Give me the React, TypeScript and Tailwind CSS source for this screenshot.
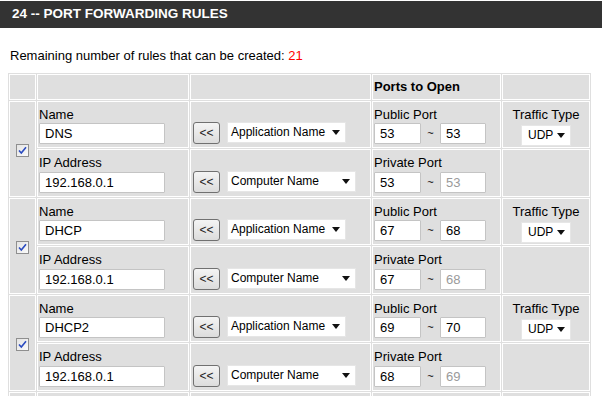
import React from "react";

type Rule = {
  name: string;
  ip: string;
  pubStart: string;
  pubEnd: string;
  privStart: string;
  privEnd: string;
};

const rules: Rule[] = [
  { name: "DNS", ip: "192.168.0.1", pubStart: "53", pubEnd: "53", privStart: "53", privEnd: "53" },
  { name: "DHCP", ip: "192.168.0.1", pubStart: "67", pubEnd: "68", privStart: "67", privEnd: "68" },
  { name: "DHCP2", ip: "192.168.0.1", pubStart: "69", pubEnd: "70", privStart: "68", privEnd: "69" },
];

const base = "border border-white bg-[#dfdfdf] p-0";
const cell = `${base} align-top`;

function Arrow() {
  return (
    <svg width="8" height="5" viewBox="0 0 8 5" className="ml-auto shrink-0">
      <path d="M0 0h8L4 5z" fill="#111" />
    </svg>
  );
}

function Field({ value, className = "", disabled = false }: { value: string; className?: string; disabled?: boolean }) {
  return (
    <div
      className={`h-[21px] whitespace-nowrap rounded-[1px] border border-[#c4c4c4] bg-white pl-[5px] leading-[19px] ${
        disabled ? "text-[#9a9a9a]" : "text-black"
      } ${className}`}
    >
      {value}
    </div>
  );
}

function Select({ label, className = "" }: { label: string; className?: string }) {
  return (
    <div
      className={`flex h-[21px] items-center gap-[4px] whitespace-nowrap border border-[#e6e6e6] bg-white pl-[3px] pr-[5px] text-[12px] leading-[19px] ${className}`}
    >
      <span>{label}</span>
      <Arrow />
    </div>
  );
}

function BackButton() {
  return (
    <div className="flex h-[22px] w-[27px] items-center justify-center rounded-[3px] border border-[#707070] bg-gradient-to-b from-[#f4f4f4] to-[#dcdcdc] text-[12px] text-[#222]">
      &lt;&lt;
    </div>
  );
}

function Check() {
  return (
    <div className="flex h-[13px] w-[13px] items-center justify-center border border-[#8f8f8f] bg-gradient-to-br from-[#e4e4e4] to-[#fafafa]">
      <svg width="9" height="9" viewBox="0 0 9 9">
        <path d="M1 4.5l2.3 2.5L8 1.2" fill="none" stroke="#2a4bc0" strokeWidth="1.6" />
      </svg>
    </div>
  );
}

function RuleRows({ rule }: { rule: Rule }) {
  return (
    <>
      <tr className="h-[47px]">
        <td rowSpan={2} className={`${base} align-middle`}>
          <div className="flex justify-center pt-[2px]">
            <Check />
          </div>
        </td>
        <td className={cell}>
          <div className="pl-[1px] pt-[4px]">
            <div className="h-[17px] leading-[17px]">Name</div>
            <Field value={rule.name} className="w-[126px]" />
          </div>
        </td>
        <td className={cell}>
          <div className="flex gap-[7px] pl-[2px] pt-[20px]">
            <BackButton />
            <Select label="Application Name" className="w-[119px]" />
          </div>
        </td>
        <td className={cell}>
          <div className="pl-[1px] pt-[4px]">
            <div className="h-[17px] leading-[17px]">Public Port</div>
            <div className="flex items-center">
              <Field value={rule.pubStart} className="w-[47px]" />
              <span className="w-[19px] text-center text-[11px]">~</span>
              <Field value={rule.pubEnd} className="w-[46px]" />
            </div>
          </div>
        </td>
        <td className={cell}>
          <div className="flex flex-col items-center pt-[4px]">
            <div className="h-[19px] leading-[18px]">Traffic Type</div>
            <Select label="UDP" className="h-[18px] w-[50px] pl-[6px] pr-[5px]" />
          </div>
        </td>
      </tr>
      <tr className="h-[48px]">
        <td className={cell}>
          <div className="pl-[1px] pt-[4px]">
            <div className="h-[18px] leading-[18px]">IP Address</div>
            <Field value={rule.ip} className="w-[126px]" />
          </div>
        </td>
        <td className={cell}>
          <div className="flex gap-[7px] pl-[2px] pt-[21px]">
            <BackButton />
            <Select label="Computer Name" className="w-[129px]" />
          </div>
        </td>
        <td className={cell}>
          <div className="pl-[1px] pt-[4px]">
            <div className="h-[18px] leading-[18px]">Private Port</div>
            <div className="flex items-center">
              <Field value={rule.privStart} className="w-[47px]" />
              <span className="w-[19px] text-center text-[11px]">~</span>
              <Field value={rule.privEnd} className="w-[46px]" disabled />
            </div>
          </div>
        </td>
        <td className={cell} />
      </tr>
    </>
  );
}

export default function App() {
  return (
    <div className="h-[396px] w-[602px] overflow-hidden bg-white font-['Liberation_Sans',Arial,sans-serif] text-[13px] text-black">
      <div className="mt-px flex h-[27px] items-center bg-[#333333] pl-[12px] text-[13.5px] font-bold text-white">
        24 -- PORT FORWARDING RULES
      </div>

      <div className="pl-[10px] pt-[20px] leading-[16px]">
        Remaining number of rules that can be created: <span className="text-[#ff0000]">21</span>
      </div>

      <table className="ml-[8px] mt-[9px] w-[583px] table-fixed border-separate border-spacing-[1px] bg-[#dfdfdf]">
        <colgroup>
          <col className="w-[27px]" />
          <col className="w-[152px]" />
          <col className="w-[181px]" />
          <col className="w-[129px]" />
          <col className="w-[88px]" />
        </colgroup>
        <tbody>
          <tr className="h-[26px]">
            <td className={cell} />
            <td className={cell} />
            <td className={cell} />
            <td className={`${base} pl-[1px] align-middle font-bold`}>Ports to Open</td>
            <td className={cell} />
          </tr>
          {rules.map((r, i) => (
            <RuleRows key={i} rule={r} />
          ))}
          <tr className="h-[47px]">
            <td className={cell} />
            <td className={cell} />
            <td className={cell} />
            <td className={cell} />
            <td className={cell} />
          </tr>
        </tbody>
      </table>
    </div>
  );
}
